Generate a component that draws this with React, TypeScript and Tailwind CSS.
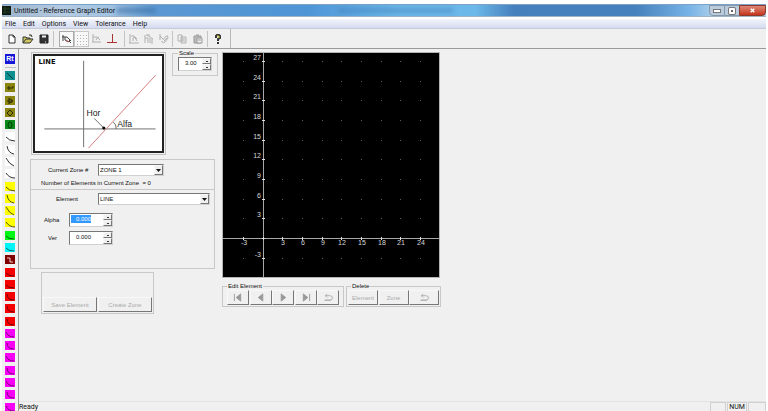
import React from 'react';

const raised = 'border border-t-[#f8f8f8] border-l-[#f8f8f8] border-r-[#777] border-b-[#777] bg-[#f0f0f0]';
const sunken = 'border border-t-[#777] border-l-[#777] border-r-[#d0d0d0] border-b-[#d0d0d0] bg-white';

const menus = ['File', 'Edit', 'Options', 'View', 'Tolerance', 'Help'];

const curves = [
  'M1 5Q4 9 10 9',
  'M2 1Q3 8 9 9',
  'M1 1Q4 7 9 9',
  'M1 4Q4 9 10 9',
];

const palette: { label: string; bg: string; stroke: string; d: string }[] = [
  { label: 'Line', bg: '#0f8f8f', stroke: '#063c3c', d: 'M2 2L8 8' },
  { label: 'Arc left', bg: '#8a8410', stroke: '#2c2a00', d: 'M2 5H8M4 3V7M8 3V5' },
  { label: 'Arc right', bg: '#8a8410', stroke: '#2c2a00', d: 'M2 5H8M4 2V8M4 3Q8 3 7 6L4 7' },
  { label: 'Circle', bg: '#8a8410', stroke: '#2c2a00', d: 'M5 2L8 5L5 8L2 5Z' },
  { label: 'Ellipse', bg: '#0b8a1a', stroke: '#003d08', d: 'M5 2Q7 2 7 5T5 8T3 5T5 2' },
  ...curves.map((d, i) => ({ label: `Curve ${i + 1}`, bg: '#ffffff', stroke: '#333333', d })),
  ...curves.map((d, i) => ({ label: `Yellow curve ${i + 1}`, bg: '#ffff00', stroke: '#55550a', d })),
  { label: 'Green curve', bg: '#00f614', stroke: '#075f0c', d: 'M1 5Q3 8 9 8' },
  { label: 'Cyan curve', bg: '#00f4f8', stroke: '#086b70', d: 'M1 5Q3 8 9 8' },
  { label: 'Step', bg: '#800000', stroke: '#f0d0d0', d: 'M2 3H5V7H8' },
  ...[1, 2, 3, 4, 5].map((n) => ({
    label: `Red curve ${n}`,
    bg: '#f60000',
    stroke: '#700000',
    d: n < 3 ? 'M1 5Q3 8 9 8' : 'M2 2Q2 8 9 8',
  })),
  ...[1, 2, 3, 4, 5, 6, 7].map((n) => ({
    label: `Magenta curve ${n}`,
    bg: '#f800f8',
    stroke: '#780078',
    d: n % 2 ? 'M1 3Q3 8 9 8' : 'M2 2Q2 8 9 8',
  })),
];

const ToolButton: React.FC<{ label: string; className?: string; narrow?: boolean; children: React.ReactNode }> = ({
  label,
  className = '',
  narrow,
  children,
}) => (
  <button
    type="button"
    aria-label={label}
    className={`flex h-4 shrink-0 items-center justify-center ${narrow ? 'w-[15px]' : 'w-4'} ${className}`}
  >
    <svg viewBox="0 0 12 12" className="h-3 w-3 shrink-0" fill="none" stroke="currentColor">
      {children}
    </svg>
  </button>
);

const Divider = () => <div className="mx-px h-4 w-px shrink-0 bg-[#c4c4c4]" />;

const Spinner: React.FC<{ id: string; value: string; className: string; selected?: boolean }> = ({
  id,
  value,
  className,
  selected,
}) => (
  <div className={`flex h-[14px] ${sunken} ${className}`}>
    <input
      id={id}
      defaultValue={value}
      className={`mt-px h-2 min-w-0 flex-1 text-[6px] leading-[8px] outline-none ${
        selected ? 'mr-3 ml-px bg-[#3399ff] text-right text-white' : 'pl-[6px] text-left'
      }`}
    />
    <div className="flex w-[9px] flex-col">
      <button type="button" aria-label="Increase" className={`flex flex-1 items-center justify-center ${raised}`}>
        <span className="h-px w-[2px] bg-[#333]" />
      </button>
      <button type="button" aria-label="Decrease" className={`flex flex-1 items-center justify-center ${raised}`}>
        <span className="h-px w-[2px] bg-[#333]" />
      </button>
    </div>
  </div>
);

const Dropdown: React.FC<{ id: string; value: string; className: string }> = ({ id, value, className }) => (
  <div className={`relative h-3 ${sunken} ${className}`}>
    <select id={id} className="block h-full w-full appearance-none pl-px text-[6px] leading-[9px] outline-none">
      <option>{value}</option>
    </select>
    <span className={`pointer-events-none absolute inset-y-0 right-0 flex w-[9px] items-center justify-center ${raised}`}>
      <svg viewBox="0 0 5 3" className="h-[3px] w-[5px]">
        <path d="M0 0H5L2.5 3Z" fill="#111" />
      </svg>
    </span>
  </div>
);

const LineSketch = () => (
  <div className="h-[103px] w-[135px] border border-[#c2c2c2] p-px">
    <svg viewBox="0 0 131 99" className="h-full w-full border-2 border-[#222] bg-white" fontFamily="Liberation Sans, Arial, sans-serif">
      <text x="3" y="8" fontSize="7" fontWeight="bold" fontFamily="DejaVu Sans, sans-serif" fill="#111">LINE</text>
      <path d="M50 5V95M9 76H125" stroke="#6e6e6e" />
      <path d="M55 96L125 20" stroke="#d27a7a" />
      <path d="M61 65L71 75M81 69Q84 71 84 76" stroke="#444" fill="none" strokeWidth="0.8" />
      <circle cx="71" cy="75" r="1.6" fill="#000" />
      <text x="53" y="63" fontSize="9" fill="#222">Hor</text>
      <text x="85" y="74" fontSize="9" fill="#222">Alfa</text>
    </svg>
  </div>
);

const steps = [0, 1, 2, 3, 4, 5, 6, 7, 8, 9, 10];

const GraphView = () => (
  <svg viewBox="0 0 216 224" className="h-[226px] w-[218px] border border-[#b4b4b4] bg-black" fontFamily="Liberation Sans, Arial, sans-serif" fontSize="7" fill="#d8d8d8">
    {steps.map((row) =>
      steps.slice(0, 10).map((col) => (
        <rect key={`${row}-${col}`} x={Math.round(20 + col * 19.65)} y={Math.round(8 + row * 19.65)} width="1" height="1" fill="#5c5c5c" />
      ))
    )}
    <path d="M40.5 0V224M0 185.5H216" stroke="#a8a8a8" />
    {steps.map((i) => (
      <path key={i} d={`M39 ${Math.round(8 + i * 19.65)}.5h3`} stroke="#e0e0e0" />
    ))}
    {steps.slice(0, 10).map((i) => (
      <path key={i} d={`M${Math.round(20 + i * 19.65)}.5 184v3`} stroke="#e0e0e0" />
    ))}
    {steps.map((i) =>
      i === 9 ? null : (
        <text key={i} x="38" y={Math.round(7 + i * 19.65)} textAnchor="end">{27 - i * 3}</text>
      )
    )}
    {steps.slice(0, 10).map((i) =>
      i === 1 ? null : (
        <text key={i} x={Math.round(21 + i * 19.65)} y="192" textAnchor="middle">{i * 3 - 3}</text>
      )
    )}
  </svg>
);

const undo = 'M3 3H8Q11 3 11 5.500T8 8H2M3 8H9M5 1L3 3L5 5';

const navIcons = [
  { label: 'First', d: 'M2 1V9M9 1V9L4 5Z' },
  { label: 'Previous', d: 'M8 1V9L3 5Z' },
  { label: 'Next', d: 'M4 1V9L9 5Z' },
  { label: 'Last', d: 'M3 1V9L8 5ZM10 1V9' },
];

const App: React.FC = () => {
  return (
    <div className="flex h-screen flex-col overflow-hidden bg-white px-[2px] pt-1 font-['Liberation_Sans',Arial,sans-serif] text-[6px] leading-[8px] text-[#111]">
      <header className="relative flex h-[13px] shrink-0 items-center border-y border-t-[#7ba2c8] border-b-[#9fb4c6] bg-[linear-gradient(90deg,#9cb4cb_0%,#b4cbe2_8%,#a2c3e2_14%,#5b98d2_20%,#4e95d6_40%,#6cb8e8_52%,#6cb8e8_62%,#4580bd_67%,#4681bd_83%,#78b4e6_90%,#a9cdea_93%)]">
        <span className="absolute top-[3px] left-[15%] h-[5px] w-[5%] bg-[#2d5f96]/50 blur-[2px]" />
        <span className="absolute top-[3px] left-[44%] h-[5px] w-[15%] bg-[#3d78b4]/40 blur-[2px]" />
        <svg viewBox="0 0 9 9" className="mr-[3px] h-[9px] w-[9px] bg-[#101c12]">
          <path d="M1 3H8M1 6H8M3 1V8" stroke="#31552b" strokeWidth="0.6" />
        </svg>
        <h1 className="font-[Roboto,sans-serif] text-[7px] whitespace-nowrap">Untitled - Reference Graph Editor</h1>
        <div className="ml-auto flex h-full">
          <button type="button" aria-label="Minimize" className="flex w-4 items-center justify-center rounded-bl-sm border border-[#8496a8] bg-[#b9cbdd]">
            <span className="h-[2px] w-[6px] bg-white ring-1 ring-[#777]" />
          </button>
          <button type="button" aria-label="Restore" className="flex w-[14px] items-center justify-center border-y border-[#8496a8] bg-[#b9cbdd]">
            <span className="h-[6px] w-[6px] rounded-[1px] border-2 border-white bg-[#666] ring-1 ring-[#777]" />
          </button>
          <button type="button" aria-label="Close" className="flex w-[27px] items-center justify-center rounded-br-sm border border-[#8b3a2c] bg-linear-to-b from-[#dc8776] to-[#c43218]">
            <svg viewBox="0 0 8 8" className="h-[7px] w-[7px]">
              <path d="M2 2L6 6M6 2L2 6" stroke="#fff" strokeWidth="1.6" />
            </svg>
          </button>
        </div>
      </header>

      <nav className="mt-[2px] flex h-[10px] shrink-0 items-center gap-[7px] border-b border-[#c6cad8] bg-linear-to-b from-[#f3f5fb] to-[#d5dcf0] pl-[3px] font-[Roboto,sans-serif] text-[7px]">
        {menus.map((name) => (
          <button key={name} type="button">{name}</button>
        ))}
      </nav>

      <div className="flex h-5 shrink-0 items-center border-b border-[#9a9a9a] bg-[#f0f0f0] pl-[2px] text-[#b0b0b0]">
        <ToolButton label="New" className="text-[#333]"><path d="M3 2H7L9 4V10H3ZM7 2V4H9" fill="#fff" /></ToolButton>
        <ToolButton label="Open" className="text-[#333]"><path d="M1 10V4H4L5 5H8V6M1 10L4 6H11L8 10ZM7 2Q10 1 10 4" fill="#cfc860" /></ToolButton>
        <ToolButton label="Save" className="text-[#222]"><path d="M2 2H10V10H2Z" fill="#333" /><path d="M4 3.500H8" stroke="#eee" strokeWidth="2" /><path d="M7 9H8" stroke="#eee" /></ToolButton>
        <Divider />
        <ToolButton narrow label="Edit graph" className="ml-1 border border-[#aaa] bg-[#f8f8f8] text-[#444]"><path d="M2 2V8M1 4H6L10 8M4 4V7L7 9L9 7L7 5M8 8L10 10" /><path d="M5 7L8 9" stroke="#b55" /></ToolButton>
        <ToolButton narrow label="Grid" className="border border-[#c8c8c8] bg-[#f8f8f8]"><path d="M1 2.500H12M1 5.500H12M1 8.500H12M1 11.500H12" strokeDasharray="1 2" /></ToolButton>
        <ToolButton narrow label="Axis"><path d="M2 1V9M1 9H10M2 4H6L9 7M5 7Q6 4 8 4" /></ToolButton>
        <ToolButton narrow label="Origin" className="text-[#a33]"><path d="M6.500 1V10M1 9.500H11" /></ToolButton>
        <div className="w-1" />
        <Divider />
        <ToolButton narrow label="Zone view"><path d="M2 1V10M1 10H11M3 3H6L9 8M5 8V5L7 4L9 6" /></ToolButton>
        <ToolButton narrow label="Element view"><path d="M2 2V10M2 5H5V10M7 5V10M9 6V11M4 2L10 6M3 2H7" /></ToolButton>
        <ToolButton narrow label="Attach"><path d="M2 1V7M2 3L5 6M5 7L8 3Q10 2 10 5L7 9Q4 11 4 8M6 8L9 5" /></ToolButton>
        <Divider />
        <ToolButton label="Copy"><path d="M2 2H6V8H2ZM5 4H10V10H5ZM6 6H9M6 8H9" /></ToolButton>
        <ToolButton label="Paste" className="text-[#999]"><path d="M2 3H9V10H2ZM4 2H7" fill="#bbb" /><path d="M5 5H10V10H5ZM6 7H9" fill="#f0f0f0" /></ToolButton>
        <Divider />
        <ToolButton label="Help" className="ml-px text-[#333]"><path d="M4 5V3L5 2H7L8 3V5L6 6V8M6 9V11" strokeWidth="2" /><path d="M5 3H7V5" stroke="#cccc30" /></ToolButton>
        <div className="ml-1 h-full w-px bg-[#b8b8b8]" />
      </div>

      <div className="flex min-h-0 flex-1 bg-[#f0f0f0]">
        <aside className="flex w-[17px] shrink-0 flex-col items-center border-r border-[#999] pt-[5px]">
          <button type="button" className="h-[10px] w-[10px] shrink-0 bg-[#1717d8] text-[7px] leading-[10px] font-bold text-white">Rt</button>
          <div className="mt-[3px] mb-[3px] h-px w-[11px] shrink-0 bg-[#c0c0c0]" />
          <div className="-mb-[2px] flex min-h-0 flex-1 flex-col justify-between">
            {palette.map((item) => (
              <button key={item.label} type="button" aria-label={item.label} className="h-[10px] w-[10px] shrink-0">
                <svg viewBox="0 0 10 10" className="h-[10px] w-[10px]">
                  <rect width="10" height="9" fill={item.bg} />
                  <path d={item.d} fill="none" stroke={item.stroke} />
                </svg>
              </button>
            ))}
          </div>
        </aside>

        <div className="flex min-w-0 flex-1 flex-col">
          <main className="flex flex-1 items-start gap-1 pt-[3px] pl-[11px]">
            <div className="w-[188px]">
              <div className="flex items-start justify-between pl-px">
                <LineSketch />
                <fieldset className="-mt-[3px] w-[46px] border border-[#c8c8c8] px-[5px] pb-1">
                  <legend className="px-px"><label htmlFor="scale">Scale</label></legend>
                  <Spinner id="scale" value="3.00" className="w-[34px]" />
                </fieldset>
              </div>

              <div className="mt-1 w-[185px] border border-[#c8c8c8]">
                <div className="h-[30px] border-b border-[#c8c8c8] pt-1">
                  <div className="flex items-center">
                    <label htmlFor="zone" className="w-[67px] pl-[17px]">Current Zone #</label>
                    <Dropdown id="zone" value="ZONE 1" className="w-[66px]" />
                  </div>
                  <p className="mt-[3px] pl-[10px] whitespace-nowrap">Number of Elements in Current Zone &nbsp;= 0</p>
                </div>
                <div className="h-[78px] pt-[3px]">
                  <div className="flex items-center">
                    <label htmlFor="element" className="w-[67px] pl-[25px]">Element</label>
                    <Dropdown id="element" value="LINE" className="w-[112px]" />
                  </div>
                  <div className="mt-2 flex items-center">
                    <label htmlFor="alpha" className="w-[38px] pl-[13px]">Alpha</label>
                    <Spinner id="alpha" value="0.000" className="w-[44px]" selected />
                  </div>
                  <div className="mt-1 flex items-center">
                    <label htmlFor="ver" className="w-[38px] pl-[17px]">Ver</label>
                    <Spinner id="ver" value="0.000" className="w-[44px]" />
                  </div>
                </div>
              </div>

              <div className="mt-[3px] ml-[11px] flex h-[42px] w-[113px] items-end justify-between border border-[#c8c8c8] p-px text-[#aaa]">
                <button type="button" disabled className={`h-[15px] w-[54px] ${raised}`}>Save Element</button>
                <button type="button" disabled className={`h-[15px] w-[54px] ${raised}`}>Create Zone</button>
              </div>
            </div>

            <div>
              <GraphView />
              <div className="mt-1 flex gap-[2px] text-[#aaa]">
                <fieldset className="w-[122px] border border-[#c8c8c8] px-1 pb-px">
                  <legend className="px-px text-[#111]">Edit Element</legend>
                  <div className="flex justify-between">
                    {navIcons.map((icon) => (
                      <button key={icon.label} type="button" aria-label={icon.label} className={`flex h-[15px] w-[22px] items-center justify-center ${raised}`}>
                        <svg viewBox="0 0 12 10" className="h-[9px] w-3">
                          <path d={icon.d} fill="#999" stroke="#999" />
                        </svg>
                      </button>
                    ))}
                    <button type="button" aria-label="Undo edit" className={`flex h-[15px] w-[22px] items-center justify-center ${raised}`}>
                      <svg viewBox="0 0 12 10" className="h-[9px] w-3"><path d={undo} fill="none" stroke="#aaa" /></svg>
                    </button>
                  </div>
                </fieldset>
                <fieldset className="w-[95px] border border-[#c8c8c8] px-px pb-px">
                  <legend className="ml-[3px] px-px text-[#111]">Delete</legend>
                  <div className="flex justify-between">
                    <button type="button" disabled className={`h-[15px] w-[30px] ${raised}`}>Element</button>
                    <button type="button" disabled className={`h-[15px] w-[30px] ${raised}`}>Zone</button>
                    <button type="button" aria-label="Undo delete" className={`flex h-[15px] w-[30px] items-center justify-center ${raised}`}>
                      <svg viewBox="0 0 12 10" className="h-[9px] w-3"><path d={undo} fill="none" stroke="#aaa" /></svg>
                    </button>
                  </div>
                </fieldset>
              </div>
            </div>
          </main>

          <footer className="flex h-[10px] shrink-0 items-end gap-px border-t border-[#e2e2e2] font-[Roboto,sans-serif] text-[7px]">
            <span>Ready</span>
            <span className="ml-auto h-full w-4 border border-b-0 border-[#d0d0d0]" />
            <span className="h-full w-5 border border-b-0 border-[#d0d0d0] text-center">NUM</span>
            <span className="h-full w-[18px] border border-b-0 border-[#d0d0d0]" />
          </footer>
        </div>
      </div>
    </div>
  );
};

export default App;
